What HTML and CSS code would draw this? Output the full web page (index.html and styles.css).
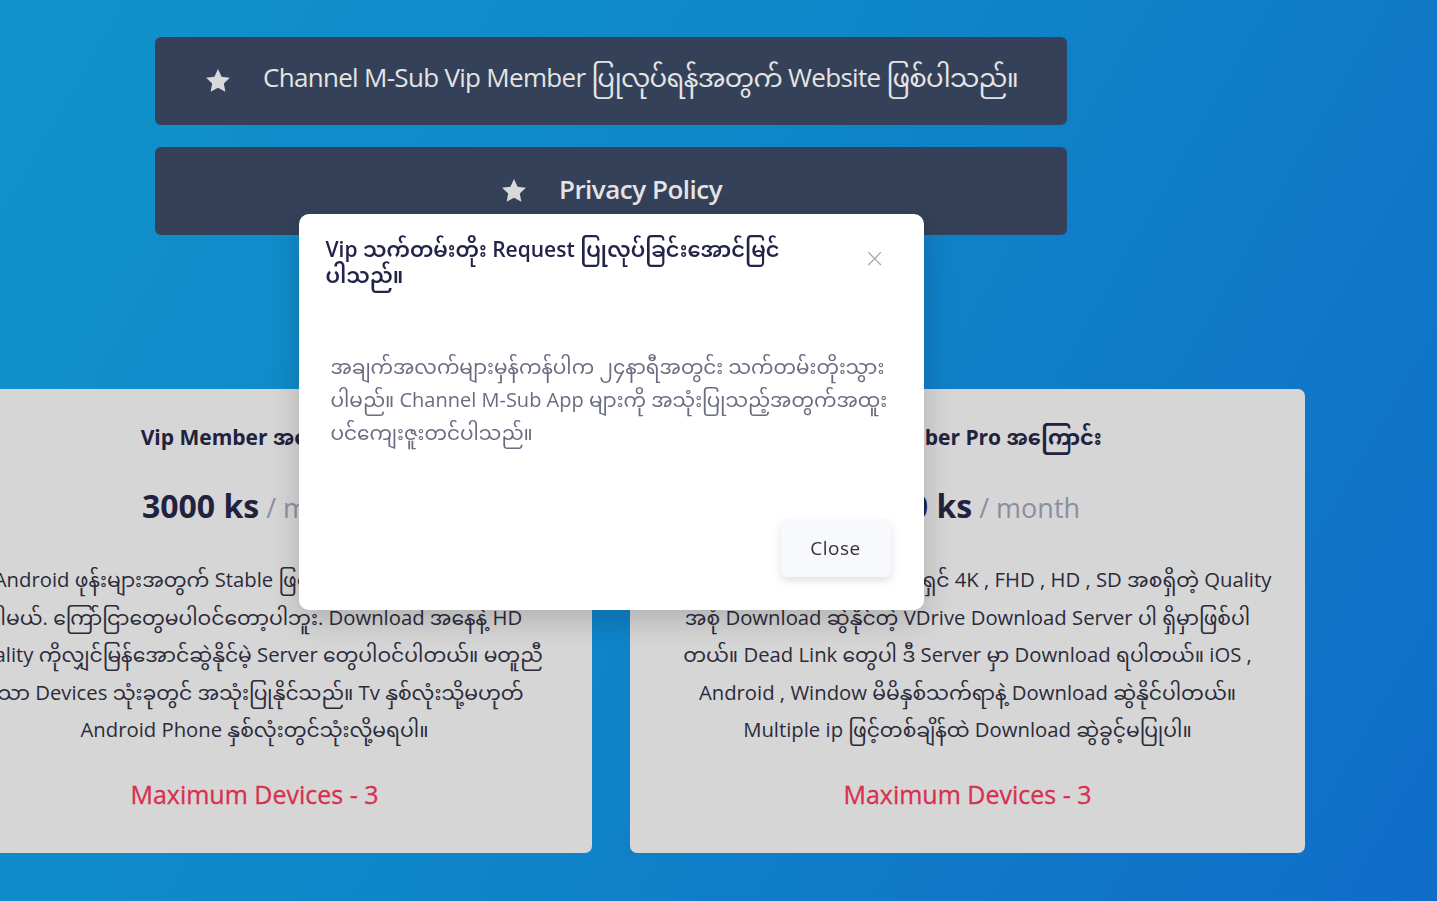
FILE: index.html
```html
<!DOCTYPE html>
<html lang="my">
<head>
<meta charset="utf-8">
<title>Channel M-Sub Vip</title>
<link rel="stylesheet" href="styles.css">
</head>
<body>
<div class="page">
  <div class="links">
    <a class="link-bar" href="#">
      <svg class="star" viewBox="0 0 24 24" width="28" height="28"><path d="M12 1.8l3.1 6.6 7.1.9-5.2 4.9 1.3 7.1L12 17.8l-6.3 3.5 1.3-7.1-5.2-4.9 7.1-.9z"/></svg>
      <span class="link-text">Channel M-Sub Vip Member ပြုလုပ်ရန်အတွက် Website ဖြစ်ပါသည်။</span>
    </a>
    <a class="link-bar" href="#">
      <svg class="star" viewBox="0 0 24 24" width="28" height="28"><path d="M12 1.8l3.1 6.6 7.1.9-5.2 4.9 1.3 7.1L12 17.8l-6.3 3.5 1.3-7.1-5.2-4.9 7.1-.9z"/></svg>
      <span class="link-text bold">Privacy Policy</span>
    </a>
  </div>

  <div class="plans">
    <div class="plan">
      <h3 class="plan-title">Vip Member အကြောင်း</h3>
      <div class="price"><span class="amount">3000 ks</span><span class="per"> / month</span></div>
      <p class="desc">Android ဖုန်းများအတွက် Stable ဖြစ်သော App ကိုအသုံးပြုရ<br>ပါမယ်. ကြော်ငြာတွေမပါဝင်တော့ပါဘူး. Download အနေနဲ့ HD<br>Quality ကိုလျှင်မြန်အောင်ဆွဲနိုင်မဲ့ Server တွေပါဝင်ပါတယ်။ မတူညီ<br>သော Devices သုံးခုတွင် အသုံးပြုနိုင်သည်။ Tv နှစ်လုံးသို့မဟုတ်<br>Android Phone နှစ်လုံးတွင်သုံးလို့မရပါ။</p>
      <div class="max">Maximum Devices - 3</div>
    </div>
    <div class="plan">
      <h3 class="plan-title">Vip Member Pro အကြောင်း</h3>
      <div class="price"><span class="amount">5000 ks</span><span class="per"> / month</span></div>
      <p class="desc">Pro Member များအတွက် ရုပ်ရှင် 4K , FHD , HD , SD အစရှိတဲ့ Quality<br>အစုံ Download ဆွဲနိုင်တဲ့ VDrive Download Server ပါ ရှိမှာဖြစ်ပါ<br>တယ်။ Dead Link တွေပါ ဒီ Server မှာ Download ရပါတယ်။ iOS ,<br>Android , Window မိမိနှစ်သက်ရာနဲ့ Download ဆွဲနိုင်ပါတယ်။<br>Multiple ip ဖြင့်တစ်ချိန်ထဲ Download ဆွဲခွင့်မပြုပါ။</p>
      <div class="max">Maximum Devices - 3</div>
    </div>
  </div>
</div>

<div class="overlay">
  <div class="modal" role="dialog">
    <div class="modal-header">
      <h4 class="modal-title">Vip သက်တမ်းတိုး Request ပြုလုပ်ခြင်းအောင်မြင်<br>ပါသည်။</h4>
      <button class="modal-x" aria-label="Close">×</button>
    </div>
    <div class="modal-body">
      အချက်အလက်များမှန်ကန်ပါက ၂၄နာရီအတွင်း သက်တမ်းတိုးသွား<br>ပါမည်။ Channel M-Sub App များကို အသုံးပြုသည့်အတွက်အထူး<br>ပင်ကျေးဇူးတင်ပါသည်။
    </div>
    <div class="modal-footer">
      <button class="btn-close">Close</button>
    </div>
  </div>
</div>
</body>
</html>
```

FILE: styles.css
```css
html, body {
  margin: 0;
  height: 100%;
}
body {
  overflow: hidden;
  background: linear-gradient(120deg, #1093cb 0%, #0f86c9 45%, #0f6dc8 100%);
  font-family: "Open Sans", "Noto Sans", "Noto Sans Myanmar", sans-serif;
}
.page {
  width: 1222px;
  padding-top: 37px;
}
.links {
  display: flex;
  flex-direction: column;
  align-items: center;
  gap: 22px;
}
.link-bar {
  width: 912px;
  height: 88px;
  box-sizing: border-box;
  background: #344158;
  border-radius: 6px;
  display: flex;
  align-items: center;
  justify-content: center;
  gap: 31px;
  color: #e4e4e4;
  text-decoration: none;
}
.star {
  fill: #d9d9d9;
  flex: none;
}
.link-text {
  font-size: 26px;
  letter-spacing: -0.7px;
}
.link-text.bold {
  font-weight: 600;
  font-size: 26px;
  letter-spacing: -0.5px;
  margin-top: -5px;
}
.plans {
  margin-top: 154px;
  display: flex;
  justify-content: center;
  gap: 38px;
}
.plan {
  flex: none;
  width: 675px;
  height: 464px;
  box-sizing: border-box;
  background: #d6d6d6;
  border-radius: 7px;
  padding-top: 30px;
  text-align: center;
  color: #2a2a3a;
}
.plan-title {
  margin: 0;
  font-size: 21px;
  font-weight: 700;
  color: #22223e;
  line-height: 36px;
}
.price {
  margin-top: 29px;
  line-height: 44px;
}
.amount {
  font-size: 32px;
  font-weight: 700;
  color: #22223e;
}
.per {
  font-size: 27px;
  color: #8a8fa0;
}
.desc {
  margin: 27px 0 0;
  font-size: 20.3px;
  line-height: 37.5px;
  white-space: nowrap;
  color: #2b2b3b;
}
.max {
  margin-top: 28px;
  font-size: 25px;
  font-weight: 500;
  color: #d8304e;
  -webkit-text-stroke: 0.3px #d8304e;
}
.overlay {
  position: fixed;
  top: 0;
  left: 0;
  width: 1222px;
  display: flex;
  justify-content: center;
  padding-top: 214px;
}
.modal {
  width: 625px;
  height: 396px;
  box-sizing: border-box;
  background: #ffffff;
  border-radius: 10px;
  box-shadow: 0 10px 30px rgba(0, 0, 0, 0.18);
  display: flex;
  flex-direction: column;
}
.modal-header {
  display: flex;
  justify-content: space-between;
  align-items: flex-start;
  padding: 22px 38px 0 27px;
}
.modal-title {
  margin: 0;
  font-size: 21px;
  font-weight: 600;
  line-height: 26px;
  color: #24244a;
}
.modal-x {
  border: 0;
  background: none;
  font-size: 26px;
  line-height: 26px;
  color: #a8a8a8;
  padding: 0;
  margin-top: 9px;
  font-family: "DejaVu Sans", sans-serif;
  font-weight: 300;
}
.modal-body {
  padding: 62px 30px 0 32px;
  font-size: 20px;
  line-height: 33px;
  color: #6a6d80;
  white-space: nowrap;
  flex: 1;
}
.modal-footer {
  display: flex;
  justify-content: flex-end;
  padding: 0 33px 33px;
}
.btn-close {
  width: 110px;
  height: 58px;
  border: 0;
  border-radius: 6px;
  background: #f7f9fc;
  box-shadow: 0 4px 8px rgba(0, 0, 0, 0.12);
  font-family: "Open Sans", "Noto Sans", sans-serif;
  font-size: 19px;
  letter-spacing: 0.5px;
  color: #333333;
}
```
